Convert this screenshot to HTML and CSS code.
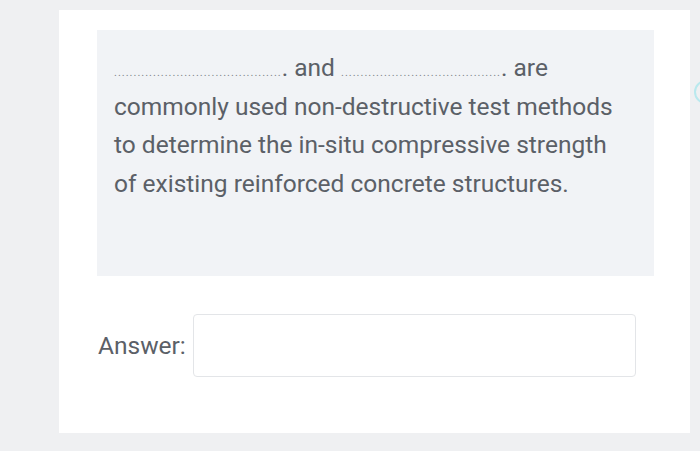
FILE: index.html
```html
<!DOCTYPE html>
<html>
<head>
<meta charset="utf-8">
<link rel="stylesheet" href="styles.css">
</head>
<body>
<div class="card">
  <div class="question">
    <p class="qtext"><span class="dots">...........................................</span>. and <span class="dots">.........................................</span>. are<br>commonly used non-destructive test methods<br>to determine the in-situ compressive strength<br>of existing reinforced concrete structures.</p>
  </div>
  <div class="answer-row">
    <label class="answer-label">Answer:</label>
    <div class="answer-input"></div>
  </div>
</div>
<div class="edge-dot"></div>
</body>
</html>
```
FILE: styles.css
```css
html, body {
  margin: 0;
  padding: 0;
}
body {
  width: 700px;
  height: 451px;
  background: #eff0f2;
  font-family: Roboto, "Liberation Sans", sans-serif;
  position: relative;
  overflow: hidden;
}
.card {
  margin: 10px 0 0 59px;
  width: 631px;
  height: 423px;
  background: #ffffff;
  box-sizing: border-box;
  padding: 20px 36px 0 38px;
}
.question {
  background: #f1f3f6;
  height: 246px;
  box-sizing: border-box;
  padding: 19px 10px 0 17px;
}
.qtext {
  margin: 0;
  font-size: 24.5px;
  line-height: 38.5px;
  color: #5b6067;
  white-space: nowrap;
}
.dots {
  font-size: 11px;
  line-height: 1;
  letter-spacing: 1px;
  color: #7f848b;
}
.answer-row {
  display: flex;
  align-items: center;
  margin-top: 38px;
}
.answer-label {
  font-size: 24.5px;
  color: #5b6067;
  width: 95px;
  padding-left: 1px;
}
.answer-input {
  width: 443px;
  height: 63px;
  box-sizing: border-box;
  border: 1px solid #e3e5e8;
  border-radius: 4px;
  background: #fff;
}
.edge-dot {
  position: absolute;
  left: 694px;
  top: 80px;
  width: 24px;
  height: 24px;
  border-radius: 50%;
  border: 2px solid #b9e9ee;
  box-sizing: border-box;
}
```
